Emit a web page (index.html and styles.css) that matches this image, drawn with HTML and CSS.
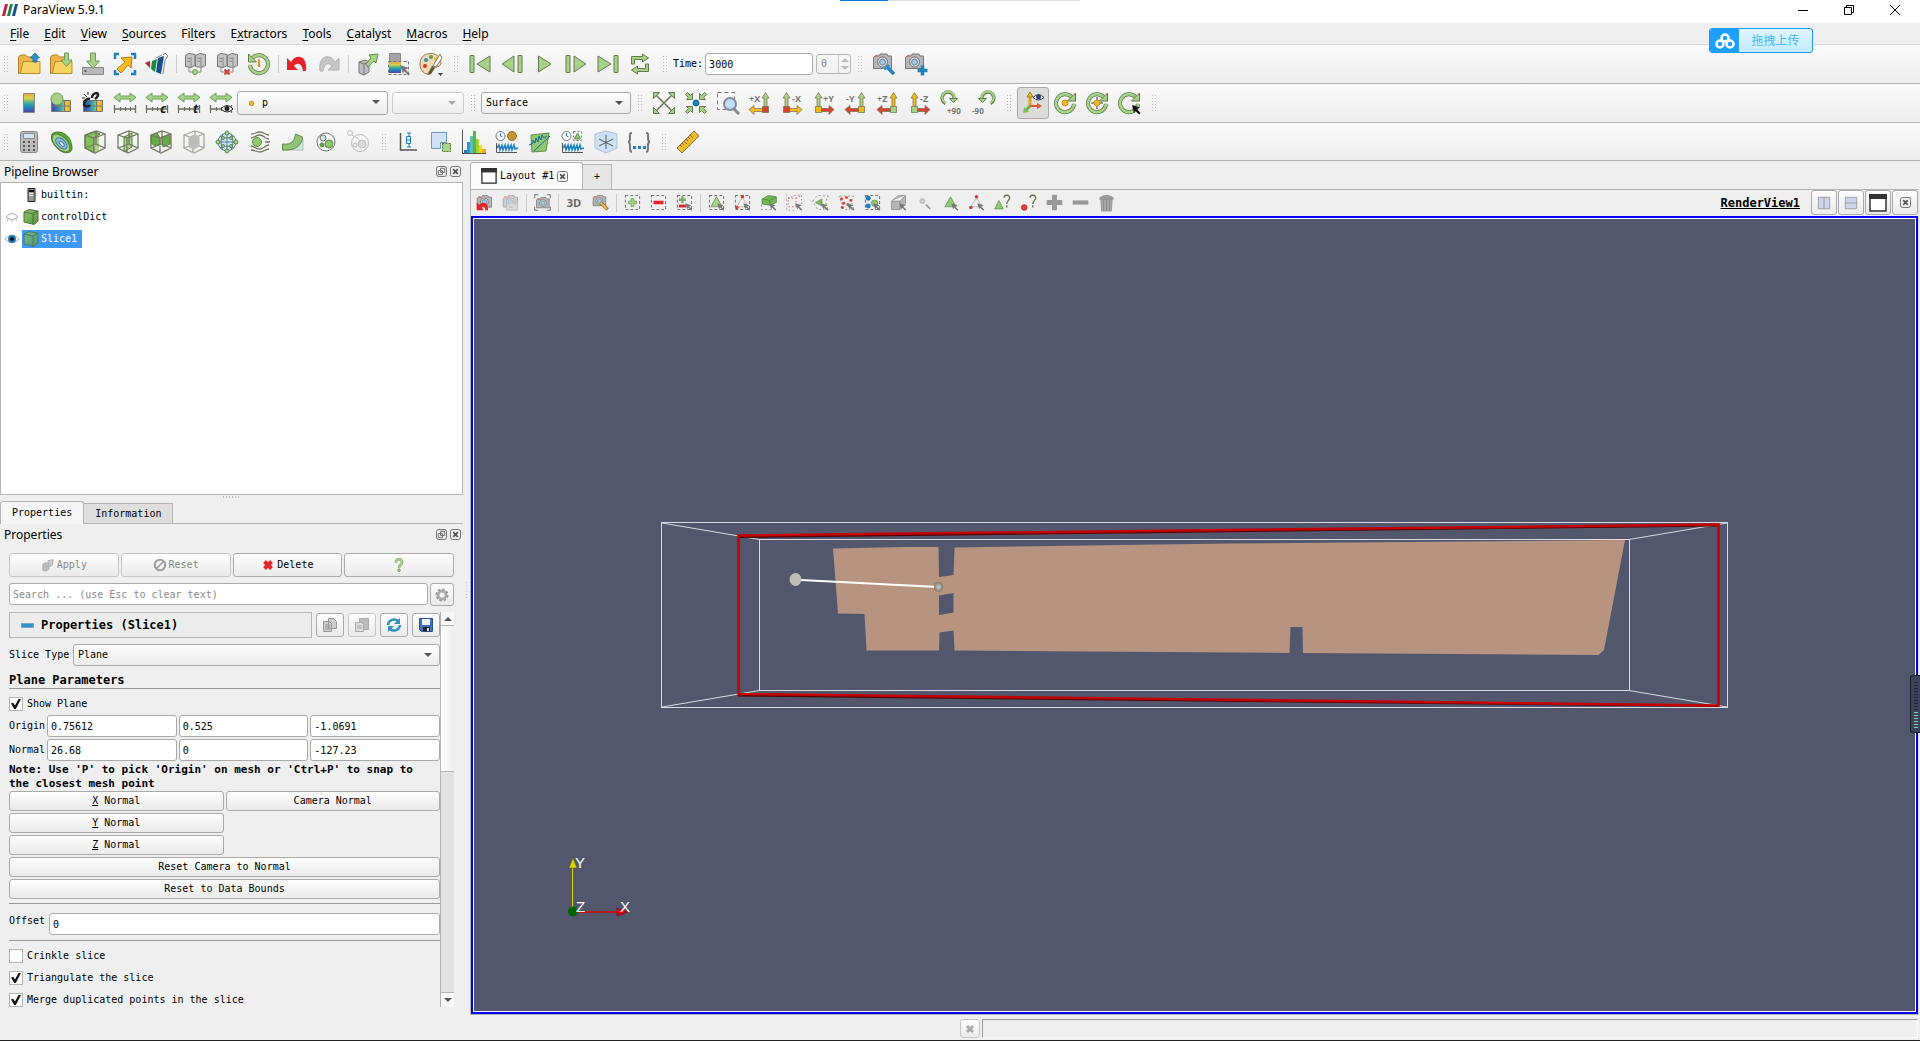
FILE: index.html
```html
<!DOCTYPE html>
<html lang="en">
<head>
<meta charset="utf-8">
<title>ParaView 5.9.1</title>
<link rel="stylesheet" href="styles.css">
</head>
<body>
<svg class="defs" aria-hidden="true">
  <defs>
    <linearGradient id="rainbow" x1="0" y1="0" x2="0" y2="1"><stop offset="0" stop-color="#e8a33a"/><stop offset=".25" stop-color="#d9d44a"/><stop offset=".5" stop-color="#3fae9a"/><stop offset=".75" stop-color="#1b7fc4"/><stop offset="1" stop-color="#5b3f9a"/></linearGradient>
    <linearGradient id="rainbowH"><stop offset="0" stop-color="#5b3f9a"/><stop offset=".3" stop-color="#1b7fc4"/><stop offset=".55" stop-color="#4cb8a0"/><stop offset=".8" stop-color="#f3c623"/><stop offset="1" stop-color="#ee9a2a"/></linearGradient>
    <linearGradient id="cube" x1="0" y1="0" x2="1" y2="1"><stop offset="0" stop-color="#8cc56a"/><stop offset="1" stop-color="#5a9440"/></linearGradient>
    <radialGradient id="ball"><stop offset="0" stop-color="#d5d2c8"/><stop offset="1" stop-color="#77776f"/></radialGradient>
    <symbol id="folder" viewBox="0 0 24 24"><path fill="#eeb64a" stroke="#b97e25" d="M1.500 21V5l2-2h5l2 2h9v16z"/><path fill="#f6d463" stroke="#b98d2d" d="M3.500 21.500 6 9.500h17v12H1.500z"/></symbol>
    <symbol id="servers" viewBox="0 0 24 24"><g fill="#c4c4c4" stroke="#777"><path d="M2.500 3.500 6 1.500l6 1v11l-4 2-5.500-1z"/><path d="M12.500 3.500l4-2 6 1v11l-4 2-6-1z"/></g><path stroke="#888" d="M8 5v10M18 5v10M4 6l3 .5M4 9l3 .5M14 6l3 .5M14 9l3 .5M6 15v5h12v-5"/></symbol>
    <symbol id="range" viewBox="0 0 24 24"><path fill="#a6d388" stroke="#6f9a57" d="M1 6.500 7 2v3h10V2l6 4.500-6 4.500V8H7v3z"/><path stroke="#6f6f5d" stroke-width="1.300" d="M1.500 14v8M7.500 16v4M12.500 16v4M17.500 16v4M22.500 14v8M1.500 18h21"/></symbol>
    <symbol id="wire" viewBox="0 0 24 24"><path stroke="#777762" stroke-width="1.300" d="M2 5 13 1l9 3v14L12 23 2 18zM2 5l9 3 11-4M11 8v15M13 1v13l9 4M13 14 2 18"/></symbol>
    <symbol id="camera" viewBox="0 0 24 24"><path fill="#b5b5b5" stroke="#777" d="M1.500 5.500 3 4h4l1-2h7l1 2h3.500v12.500h-18z"/><circle cx="10.500" cy="10" r="5" fill="#dcdcdc" stroke="#777"/><circle cx="10.500" cy="10" r="3" fill="#9fc8e4" stroke="#6a8ba0"/><rect x="3" y="3" width="3" height="2" fill="#ef6a50" stroke="none"/></symbol>
    <symbol id="cursor" viewBox="0 0 24 24"><path fill="#777" stroke="none" d="m13 13 9 3-3.500 1.500L23 22l-1.500 1.500-4.500-4.500L16 22z"/></symbol>
    <symbol id="dash" viewBox="0 0 24 24"><path stroke="#777" stroke-width="1.500" stroke-dasharray="4 3" d="M2 2h20v20H2z"/></symbol>
    <symbol id="clock" viewBox="0 0 24 24"><circle cx="5.500" cy="6" r="4.500" fill="#fff" stroke="#777"/><path stroke="#1b7fc4" d="M5.500 3v3l2 1"/><path stroke="#1b7fc4" stroke-width="1.500" d="M2 18l2-3 1 5 2-5 1 5 2-5 1 5 2-5 1 5 2-5 1 5 2-5 1 4 3-1"/><path stroke="#555" d="M1.500 13v9.500H22"/></symbol>
    <symbol id="rot" viewBox="0 0 24 24"><path stroke="#66784f" stroke-width="4" d="M19 6.500A9 9 0 1 0 21 13"/><path stroke="#a6d388" stroke-width="2.500" d="M19 6.500A9 9 0 1 0 21 12.500"/><path fill="#a6d388" stroke="#66784f" d="M22.500 2v8h-8z"/></symbol>
    <symbol id="float" viewBox="0 0 12 12"><rect x=".5" y=".5" width="11" height="11" rx="2.500" stroke="#666" fill="none"/><path d="M5 2.500h4.500V7H5zM2.500 5H7v4.500H2.500z" fill="#eee" stroke="#666"/></symbol>
    <symbol id="close" viewBox="0 0 12 12"><rect x=".5" y=".5" width="11" height="11" rx="2.500" stroke="#666" fill="none"/><path d="m3.500 3.500 5 5m0-5-5 5" stroke="#555" stroke-width="2"/></symbol>
    <symbol id="box" viewBox="0 0 16 16"><path d="M1 3 6 .5 15 2v10l-4 3.500L1 13z" fill="url(#cube)" stroke="#4d6e3c"/><path d="M1 3l9 2 5-3M10 5v10" stroke="#4d6e3c" fill="none"/></symbol>
    <symbol id="window" viewBox="0 0 18 18"><rect x="1" y="1" width="16" height="16" fill="#fff" stroke="#333" stroke-width="1.500"/><path fill="#333" d="M0 0h18v5H0z"/></symbol>
  </defs>
</svg>

<div class="app">
  <header class="titlebar">
    <svg class="logo" viewBox="0 0 16 12"><path fill="#c2203a" d="M3 0h3L3 12H0z"/><path fill="#1d8a3c" d="M8 0h3L8 12H5z"/><path fill="#1a4e8c" d="M13 0h3l-3 12h-3z"/></svg>
    <span class="apptitle">ParaView 5.9.1</span>
    <span class="progress"></span>
    <div class="winbtns">
      <button aria-label="Minimize"><svg viewBox="0 0 12 12"><path d="M1 6.500h10"/></svg></button>
      <button aria-label="Restore"><svg viewBox="0 0 12 12"><path d="M1.500 3.500h7v7h-7zM3.500 3V1.500h7v7H9"/></svg></button>
      <button aria-label="Close window"><svg viewBox="0 0 12 12"><path d="m1 1 10 10m0-10L1 11"/></svg></button>
    </div>
  </header>

  <nav class="menubar">
    <a href="#"><u>F</u>ile</a><a href="#"><u>E</u>dit</a><a href="#"><u>V</u>iew</a><a href="#"><u>S</u>ources</a><a href="#">Fi<u>l</u>ters</a><a href="#">E<u>x</u>tractors</a><a href="#"><u>T</u>ools</a><a href="#"><u>C</u>atalyst</a><a href="#"><u>M</u>acros</a><a href="#"><u>H</u>elp</a>
  </nav>

  <div class="toolbar">
    <i class="handle first"></i>
    <button aria-label="Open"><svg viewBox="0 0 24 24"><use href="#folder"/><path fill="#2e93cc" stroke="#23729f" d="m18 1 4.500 5H20v4h-4V6h-2.500z"/></svg></button>
    <button aria-label="Load state"><svg viewBox="0 0 24 24"><use href="#folder"/><path fill="#a6d388" stroke="#6f9a57" d="M15.500 1h4v7h3.500l-5.500 6.500L12 8h3.500z"/></svg></button>
    <button aria-label="Save data"><svg viewBox="0 0 24 24"><path fill="#b9b9b9" stroke="#888" d="M1.500 15.500h21v7h-21z"/><path fill="#a6d388" stroke="#6f9a57" d="M9.500 1h5v8h4L12 16.500 5.500 9h4z"/><circle cx="4.500" cy="19" r="1" fill="#444" stroke="none"/></svg></button>
    <button aria-label="Save screenshot"><svg viewBox="0 0 24 24"><path stroke="#2680b8" stroke-width="2.500" d="M2 7V2h4M18 2h4v5M22 18v4h-4M6 22H2v-4"/><path fill="#f5bd1f" stroke="#b07c14" d="m8 6 11-1-1 11-3-3-7 8-4-4 8-7z"/></svg></button>
    <button aria-label="Save animation"><svg viewBox="0 0 24 24"><path fill="#c2203a" stroke="#888" stroke-width=".5" d="m0 11 5-2v7z"/><path fill="#1d8a3c" stroke="none" d="m7 9 5-2-2 13-4-3z"/><path fill="#1a4e8c" stroke="none" d="m13 6 6-2-3 18-5-2z"/><path stroke="#888" d="m18 3 2-2 3 3-3 4-2 14M17 3l-6 3"/></svg></button>
    <i class="sep"></i>
    <button aria-label="Connect"><svg viewBox="0 0 24 24"><use href="#servers"/><circle cx="12" cy="20" r="2.500" fill="#a6d388" stroke="#6f9a57"/></svg></button>
    <button aria-label="Disconnect"><svg viewBox="0 0 24 24"><use href="#servers"/><path stroke="#d83a2a" stroke-width="2" d="m9.500 17.500 5 5m0-5-5 5"/></svg></button>
    <button aria-label="Reset session"><svg viewBox="0 0 24 24"><path stroke="#66784f" stroke-width="4" d="M5 6.500A9 9 0 1 1 3 13"/><path stroke="#a6d388" stroke-width="2.500" d="M5 6.500A9 9 0 1 1 3 12.500"/><path fill="#a6d388" stroke="#66784f" d="M1.500 2v8h8z"/><path stroke="#d89a20" stroke-width="2" d="M12 7v6"/><circle cx="12" cy="13.500" r="1.500" fill="#d89a20" stroke="none"/></svg></button>
    <i class="sep"></i>
    <button aria-label="Undo"><svg viewBox="0 0 24 24"><path fill="#e8222a" stroke="none" d="M2 6v12h11l-4-4c3-4 8-3 9 5h3C23 3 11 1 6 10z"/></svg></button>
    <button aria-label="Redo" disabled><svg viewBox="0 0 24 24"><path fill="#c6c6c6" stroke="#b2b2b2" d="M22 6v12H11l4-4c-3-4-8-3-9 5H3C1 3 13 1 18 10z"/></svg></button>
    <i class="sep"></i>
    <button aria-label="Extract"><svg viewBox="0 0 24 24"><path fill="#bdbdbd" stroke="#777" d="m4 10 6-2 4 2v10l-5 3-5-2z"/><path stroke="#777" d="m4 10 5 2 5-2m-5 2v11"/><path fill="#a6d388" stroke="#6f8a57" d="m14 3 9-1-2 9-2-2-6 6-2-3 5-6z"/></svg></button>
    <button aria-label="Auto color"><svg viewBox="0 0 24 24"><path fill="#a5a5a5" stroke="#888" d="M2.500 1.500h11V11h-11z"/><path fill="url(#rainbow)" stroke="none" d="M2 10h12v11H2z"/><path stroke="#777" stroke-dasharray="3 2" d="M1.500 9.500h20v13h-20z"/><use href="#cursor"/></svg></button>
    <button aria-label="Color palette"><svg viewBox="0 0 24 24"><path fill="#f0d9b4" stroke="#9b7a53" d="M12 1.500C5 1.500 1 6 1 12c0 7 5 11 10 10 3-1 1-4 2-6s8 1 9-5c0-5-4-9.500-10-9.500z"/><circle cx="7" cy="8" r="2" fill="#2d8fd0" stroke="none"/><circle cx="12" cy="5" r="2" fill="#57a345" stroke="none"/><circle cx="17" cy="7" r="2" fill="#f0ba20" stroke="none"/><circle cx="6" cy="14" r="2" fill="#d8322a" stroke="none"/><path fill="#fff" stroke="#777" d="m21 2 2 4-6 9-3-1z"/><path fill="#6c5338" stroke="none" d="m13 14 3 2-4 6-4 1z"/><path fill="#444" stroke="none" d="M19 21h5l-2.500 3z"/></svg></button>
    <i class="handle"></i>
    <button aria-label="First frame"><svg viewBox="0 0 24 24" class="play"><path d="M2 3.500h4v17H2zM22 4v16L9 12z"/></svg></button>
    <button aria-label="Previous frame"><svg viewBox="0 0 24 24" class="play"><path d="M18 3.500h4v17h-4zM14 4v16L2 12z"/></svg></button>
    <button aria-label="Play"><svg viewBox="0 0 24 24" class="play"><path d="M6.500 4v16L19 12z"/></svg></button>
    <button aria-label="Next frame"><svg viewBox="0 0 24 24" class="play"><path d="M2 3.500h4v17H2zM10 4v16l12-8z"/></svg></button>
    <button aria-label="Last frame"><svg viewBox="0 0 24 24" class="play"><path d="M18 3.500h4v17h-4zM2 4v16l13-8z"/></svg></button>
    <button aria-label="Loop"><svg viewBox="0 0 24 24" class="play"><path d="M3.500 12V4.500h11V2l6 4-6 4V7.500h-8V12zM20.500 12v7.500h-11V22l-6-4 6-4v2.500h8V12z"/></svg></button>
    <i class="handle"></i>
    <label class="timelabel" for="time">Time:</label>
    <input class="field time" id="time" value="3000">
    <span class="spin"><input value="0" disabled aria-label="Time step"><span class="steps"><i class="up"></i><i class="down"></i></span></span>
    <i class="handle"></i>
    <button aria-label="Adjust camera"><svg viewBox="0 0 24 24"><use href="#camera"/><path stroke="#2680b8" stroke-width="3.500" d="m14 14 8 8"/><path stroke="#2e93cc" stroke-width="2.500" d="m12 17 3-1 2-3"/></svg></button>
    <button aria-label="Add camera link"><svg viewBox="0 0 24 24"><use href="#camera"/><path stroke="#2680b8" stroke-width="3.500" d="M18.500 13.500v10M13.500 18.500h10"/></svg></button>
  </div>

  <div class="toolbar">
    <i class="handle first"></i>
    <button aria-label="Color legend"><svg viewBox="0 0 24 24"><path fill="url(#rainbow)" stroke="#888" d="M6.500 2.500h11v19h-11z"/></svg></button>
    <button aria-label="Edit color map"><svg viewBox="0 0 24 24"><path fill="url(#rainbowH)" stroke="#777" d="M2.500 9.500h19v11h-19zM2.500 15h19M9 9.500v11M15.500 9.500v11"/><circle cx="8" cy="8" r="6" fill="#a6d388" stroke="#6f9a57"/></svg></button>
    <button aria-label="Separate color map"><svg viewBox="0 0 24 24"><path fill="url(#rainbowH)" stroke="#777" d="M2.500 9.500h19v11h-19zM2.500 15h19M9 9.500v11M15.500 9.500v11"/><path stroke="#222" stroke-width="2.500" d="M9 8C6 7 3 10 3 13s5 3 6 1M11 7c0-3 2-5 5-5 2 1 1 4-2 6"/><path stroke="#222" d="m3 3 3 3M7 1v3M1 7h3"/></svg></button>
    <button aria-label="Rescale to data"><svg viewBox="0 0 24 24"><use href="#range"/></svg></button>
    <button aria-label="Rescale to custom"><svg viewBox="0 0 24 24"><use href="#range"/><text x="15" y="22" class="glyph">c</text></svg></button>
    <button aria-label="Rescale over time"><svg viewBox="0 0 24 24"><use href="#range"/><text x="16" y="22" class="glyph">t</text></svg></button>
    <button aria-label="Rescale to visible"><svg viewBox="0 0 24 24"><use href="#range"/><path fill="#fff" stroke="#222" d="M12 18q6-7 12 0-6 6-12 0z"/><circle cx="18" cy="17.500" r="2.500" fill="#222" stroke="none"/></svg></button>
    <span class="combo array"><i class="point"></i><select aria-label="Coloring array"><option>p</option></select></span>
    <span class="combo component off"><select aria-label="Component" disabled><option></option></select></span>
    <i class="handle"></i>
    <span class="combo repr"><select aria-label="Representation"><option>Surface</option></select></span>
    <i class="handle"></i>
    <button aria-label="Reset camera"><svg viewBox="0 0 24 24"><path stroke="#66784f" stroke-width="1.500" d="m4 4 16 16m0-16L4 20"/><path fill="#a6d388" stroke="#66784f" d="M1.500 1.500h6l-6 6zM22.500 1.500v6l-6-6zM1.500 22.500v-6l6 6zM22.500 22.500h-6l6-6z"/></svg></button>
    <button aria-label="Zoom to data"><svg viewBox="0 0 24 24"><path fill="#a6d388" stroke="#66784f" d="M8.500 8.500h-6l2-2-3-3 2-2 3 3 2-2zM15.500 8.500v-6l2 2 3-3 2 2-3 3 2 2zM8.500 15.500v6l-2-2-3 3-2-2 3-3-2-2zM15.500 15.500h6l-2 2 3 3-2 2-3-3-2 2z"/><circle cx="12" cy="12" r="3" fill="#1b7fc4" stroke="#165f93"/></svg></button>
    <button aria-label="Zoom to box"><svg viewBox="0 0 24 24"><path stroke="#777" stroke-dasharray="4 3" d="M1.500 1.500h17v17h-17z"/><circle cx="14" cy="13" r="6" fill="#bfe0f3" stroke="#889" stroke-width="2"/><path stroke="#888" stroke-width="3" d="m18 18 5 5"/></svg></button>
    <button aria-label="Set view +X"><svg viewBox="0 0 24 24" class="ax"><path fill="#a6d388" d="M17.500 1.500 21 7h-2v9h-3V7h-2z"/><path fill="#f3bb1e" d="m1 18.500 5-4v3h9v3H6v3z"/><path fill="#d8402f" d="M14.500 15.500h6v6h-6z"/><text x="1" y="11">+X</text></svg></button>
    <button aria-label="Set view -X"><svg viewBox="0 0 24 24" class="ax"><path fill="#a6d388" d="M6.500 1.500 10 7H8v9H5V7H3z"/><path fill="#f3bb1e" d="m22 18.500-5-4v3H9v3h8v3z"/><path fill="#d8402f" d="M3.500 15.500h6v6h-6z"/><text x="12" y="11">-X</text></svg></button>
    <button aria-label="Set view +Y"><svg viewBox="0 0 24 24" class="ax"><path fill="#a6d388" d="M6.500 1.500 10 7H8v9H5V7H3z"/><path fill="#d8402f" d="m22 18.500-5-4v3H9v3h8v3z"/><path fill="#f3bb1e" d="M3.500 15.500h6v6h-6z"/><text x="11" y="11">+Y</text></svg></button>
    <button aria-label="Set view -Y"><svg viewBox="0 0 24 24" class="ax"><path fill="#a6d388" d="M17.500 1.500 21 7h-2v9h-3V7h-2z"/><path fill="#d8402f" d="m1 18.500 5-4v3h9v3H6v3z"/><path fill="#f3bb1e" d="M14.500 15.500h6v6h-6z"/><text x="2" y="11">-Y</text></svg></button>
    <button aria-label="Set view +Z"><svg viewBox="0 0 24 24" class="ax"><path fill="#f3bb1e" d="M17.500 1.500 21 7h-2v9h-3V7h-2z"/><path fill="#d8402f" d="m1 18.500 5-4v3h9v3H6v3z"/><path fill="#a6d388" d="M14.500 15.500h6v6h-6z"/><text x="1" y="11">+Z</text></svg></button>
    <button aria-label="Set view -Z"><svg viewBox="0 0 24 24" class="ax"><path fill="#f3bb1e" d="M6.500 1.500 10 7H8v9H5V7H3z"/><path fill="#d8402f" d="m22 18.500-5-4v3H9v3h8v3z"/><path fill="#a6d388" d="M3.500 15.500h6v6h-6z"/><text x="12" y="11">-Z</text></svg></button>
    <button aria-label="Rotate clockwise"><svg viewBox="0 0 24 24"><path stroke="#66784f" stroke-width="3.500" d="M5.500 12.500A6 6 0 1 1 14 8"/><path stroke="#a6d388" stroke-width="2" d="M6 12A6 6 0 1 1 14 8"/><path fill="#a6d388" stroke="#66784f" d="M9.500 7.500h8l-4 4z"/><text x="7" y="23" class="deg">+90</text></svg></button>
    <button aria-label="Rotate counterclockwise"><svg viewBox="0 0 24 24"><path stroke="#66784f" stroke-width="3.500" d="M18.500 12.500A6 6 0 1 0 10 8"/><path stroke="#a6d388" stroke-width="2" d="M18 12A6 6 0 1 0 10 8"/><path fill="#a6d388" stroke="#66784f" d="M14.500 7.500h-8l4 4z"/><text x="0" y="23" class="deg">-90</text></svg></button>
    <i class="handle"></i>
    <button class="on" aria-label="Show orientation axes"><svg viewBox="0 0 24 24"><path stroke="#e0a51c" stroke-width="3" d="M9 15V6"/><path fill="#f3bb1e" stroke="#a57b1b" d="m9 1 3 5H6z"/><path stroke="#e0552f" stroke-width="2" d="M9 15h8"/><path fill="#e0552f" stroke="none" d="m21 15-5-3v6z"/><path stroke="#69b04d" stroke-width="3" d="m9 15-4 4"/><path fill="#7cc35d" stroke="none" d="m2 22 1-6 5 5z"/><path fill="#fff" stroke="#444" d="M12 6.500q5.500-6 11 0-5.500 5-11 0z"/><circle cx="17.500" cy="6" r="2.500" fill="#32387a" stroke="none"/></svg></button>
    <button aria-label="Show center"><svg viewBox="0 0 24 24"><use href="#rot"/><circle cx="12" cy="12" r="3" fill="#f3bb1e" stroke="#c58d1a"/></svg></button>
    <button aria-label="Reset center"><svg viewBox="0 0 24 24"><use href="#rot"/><path stroke="#777" stroke-width="1.500" d="M12 6v12M6 12h12"/><circle cx="12" cy="12" r="3" fill="#f3bb1e" stroke="#c58d1a"/></svg></button>
    <button aria-label="Pick center"><svg viewBox="0 0 24 24"><use href="#rot"/><path fill="#111" stroke="none" d="m15 14 8 2.500-3 1.500 3.500 4-1.500 1.500-4-4-1 3z"/></svg></button>
    <i class="handle"></i>
  </div>

  <div class="toolbar wide">
    <i class="handle first"></i>
    <button aria-label="Calculator"><svg viewBox="0 0 24 24"><rect x="3.500" y="1.500" width="17" height="21" rx="2" fill="#bbb" stroke="#888"/><path fill="#cfe6f5" stroke="#888" d="M6.500 3.500h11v5h-11z"/><path stroke="#555" stroke-width="2" stroke-dasharray="2 3" d="M6 12h13M6 16h13M6 20h13"/></svg></button>
    <button aria-label="Contour"><svg viewBox="0 0 24 24"><path fill="#56a838" stroke="#3e7f2a" d="M2 4C8-1 22 3 22 19c-1 5-9 5-14 0C3 15 0 8 2 4z"/><ellipse cx="11" cy="13" rx="11" ry="6" transform="rotate(45 11 13)" fill="#a6d388" stroke="#55802f"/><ellipse cx="11.500" cy="13" rx="7" ry="4" transform="rotate(45 11 13)" fill="#8fc0de" stroke="#4178a0"/><ellipse cx="12" cy="13" rx="3.500" ry="1.500" transform="rotate(45 11 13)" fill="#dceef8" stroke="#4178a0"/></svg></button>
    <button aria-label="Clip"><svg viewBox="0 0 24 24"><path fill="#7fbf5c" stroke="#54803c" d="M2 5 12 2l5 2-6 4v15l-9-5z"/><path fill="#a6d388" stroke="none" d="m11 8 5-3v15l-5 3z"/><use href="#wire"/></svg></button>
    <button aria-label="Slice"><svg viewBox="0 0 24 24"><path fill="#a6d388" stroke="#54803c" d="m8 7 8-4v14l-8 5z"/><use href="#wire"/></svg></button>
    <button aria-label="Threshold"><svg viewBox="0 0 24 24"><path fill="#66ad47" stroke="#54803c" d="m2 5 6-2 3 5v6l-5 2-4-3zM13 7l8-3v10l-7 3z"/><use href="#wire"/></svg></button>
    <button aria-label="Extract subset"><svg viewBox="0 0 24 24" class="dim"><use href="#wire"/><path fill="#999" stroke="#888" d="m7 7 6-2 4 2v9l-5 3-5-2z"/></svg></button>
    <button aria-label="Glyph"><svg viewBox="0 0 24 24"><circle cx="12" cy="12" r="9" fill="#cfe4f3" stroke="#557b96"/><path stroke="#557b96" d="M12 3v18M3 12h18M5 6q7 4 14 0M5 18q7-4 14 0M8 4q-4 8 0 16M16 4q4 8 0 16"/><g fill="#a6d388" stroke="#5f8a48"><circle cx="12" cy="3" r="2"/><circle cx="12" cy="21" r="2"/><circle cx="3" cy="12" r="2"/><circle cx="21" cy="12" r="2"/><circle cx="8" cy="8" r="1.500"/><circle cx="16" cy="8" r="1.500"/><circle cx="8" cy="16" r="1.500"/><circle cx="16" cy="16" r="1.500"/></g></svg></button>
    <button aria-label="Stream tracer"><svg viewBox="0 0 24 24"><path stroke="#777762" stroke-width="1.300" d="M3 4c4 0 5-2 9-2s5 3 9 3M3 8c3 0 4-3 9-3 4 0 5 4 9 4M3 20c4 0 5 2 9 2s5-3 9-3M3 16c3 0 4 3 9 3 4 0 5-4 9-4M17 12h5"/><circle cx="9" cy="12" r="4.500" fill="#8ecb6b" stroke="#5f8a48"/></svg></button>
    <button aria-label="Warp by vector"><svg viewBox="0 0 24 24"><path fill="#cfe9e2" stroke="#a8bfb8" d="M2 20h20V9z"/><path fill="#8fc373" stroke="#5f8a48" d="M1.500 14c9 1 12-3 13-10l7 3c0 8-7 14-20 13z"/></svg></button>
    <button aria-label="Group datasets"><svg viewBox="0 0 24 24"><circle cx="12" cy="12" r="9" fill="#f4f8fa" stroke="#777"/><circle cx="9" cy="8" r="3" fill="#cce6dc" stroke="#777"/><circle cx="15" cy="14" r="4" fill="#8ecb6b" stroke="#5f8a48"/><circle cx="8" cy="15" r="2" fill="#5fab42" stroke="#5f8a48"/></svg></button>
    <button aria-label="Extract level" disabled><svg viewBox="0 0 24 24" class="dim"><circle cx="13" cy="13" r="8.500"/><circle cx="15" cy="14" r="4" fill="#ccc"/><circle cx="8" cy="15" r="2"/><circle cx="3" cy="3" r="2.500"/><path d="m5 5 7 4"/></svg></button>
    <i class="handle"></i>
    <button aria-label="Plot over line"><svg viewBox="0 0 24 24"><path stroke="#555" stroke-width="1.500" d="M4.500 3v17H21"/><path stroke="#1b7fc4" d="M13 3v3m0 8v3M11 3h4m-4 14h4M10.500 6.500h4v7h-4zM10.500 10h4"/></svg></button>
    <button aria-label="Extract selection"><svg viewBox="0 0 24 24"><path fill="#cfe2f3" stroke="#6d9ac0" d="M2.500 2.500h15v10h-6v6h-9z"/><path fill="#a6d388" stroke="#55702f" stroke-dasharray="2 1" d="M13.500 13.500h8v8h-8z"/></svg></button>
    <button aria-label="Histogram"><svg viewBox="0 0 24 24" class="hist"><path fill="#3575a8" d="M2 20h3v3H2z"/><path fill="#1e9bf0" d="M5 12h3v11H5z"/><path fill="#62c0aa" d="M8 6h3v17H8z"/><path fill="#54b848" d="M11 1h3v22h-3z"/><path fill="#a5d133" d="M14 9h3v14h-3z"/><path fill="#f9dc05" d="M17 15h3v8h-3z"/><path fill="#f5a81c" d="M20 19h4v4h-4z"/><path fill="#555" d="M0 0h1v24H0zM0 23h24v1H0z"/></svg></button>
    <button aria-label="Plot data over time"><svg viewBox="0 0 24 24"><use href="#clock"/><circle cx="17" cy="6" r="4.500" fill="#c5952f" stroke="#8f6b20"/></svg></button>
    <button aria-label="Plot on intersection"><svg viewBox="0 0 24 24"><path fill="#8fca70" stroke="#5f8a48" d="m3 5 18-2-3 18-14 1z"/><path stroke="#1b5fa0" d="m1 15 4-2 0-3 2 3 1-5 2 4 1-6 2 4 1-5 2 3 3-2M6 21 22 6"/></svg></button>
    <button aria-label="Plot selection over time"><svg viewBox="0 0 24 24"><use href="#clock"/><path stroke="#777" stroke-dasharray="2 2" d="M12.500 1.500h8v9h-8z"/><path fill="#8fca70" stroke="#5f8a48" d="m16.500 3 3 6h-6z"/></svg></button>
    <button aria-label="Probe location"><svg viewBox="0 0 24 24"><path fill="#cfe2f3" stroke="#a9c6dd" d="m1 4 11-3 11 3v14l-11 5-11-5z"/><path stroke="#555" d="M12 5v14M5 9l14 7M19 9 5 16"/></svg></button>
    <button aria-label="Programmable filter"><svg viewBox="0 0 24 24"><path stroke="#777" stroke-width="2" d="M5 3c-3 0-2 2-2 5s-1 4-2 4c2 0 2 2 2 5s0 5 2 5M19 3c3 0 2 2 2 5s1 4 2 4c-2 0-2 2-2 5s0 5-2 5"/><path stroke="#2680b8" stroke-width="3" stroke-dasharray="3 2" d="M6 17.500h13"/></svg></button>
    <i class="handle"></i>
    <button aria-label="Ruler"><svg viewBox="0 0 24 24"><path fill="#f0bb28" stroke="#8f7231" d="m1 18 17-17 5 5L6 23z"/><path stroke="#7b6128" d="m4 15 2 2m0-4 2 2m0-4 3 3m-1-5 2 2m0-4 2 2m0-4 3 3"/></svg></button>
  </div>

  <main class="main">
    <aside class="dock">
      <div class="docktitle"><h2>Pipeline Browser</h2><button aria-label="Float pipeline"><svg><use href="#float"/></svg></button><button aria-label="Close pipeline"><svg><use href="#close"/></svg></button></div>
      <ul class="tree">
        <li><span class="eye"></span><span class="node"><svg viewBox="0 0 16 16"><path d="M5 1.500h7v13H5z" fill="#999" stroke="#222"/><path stroke="#111" stroke-width="2" d="M6 4h5"/><path stroke="#eee" d="M6 6.500h4M6 8.500h4"/></svg>builtin:</span></li>
        <li><span class="eye"><svg viewBox="0 0 14 10"><path d="M1 5q6-7 12 0M1 5q6 5 12 0M3 7 2 9M7 8v2M11 7l1 2" stroke="#aaa" fill="none"/></svg></span><span class="node"><svg><use href="#box"/></svg>controlDict</span></li>
        <li><span class="eye"><svg viewBox="0 0 14 10"><path d="M0 5q7-8 14 0-7 8-14 0z" fill="#fff" stroke="#aaa"/><circle cx="7" cy="5" r="4" fill="#1b7fb8"/><circle cx="7" cy="5" r="2" fill="#000"/></svg></span><span class="node selected"><svg><use href="#box"/></svg>Slice1</span></li>
      </ul>
      <i class="hgrip"></i>
      <div class="tabs"><button class="active">Properties</button><button>Information</button></div>
      <div class="docktitle"><h2>Properties</h2><button aria-label="Float properties"><svg><use href="#float"/></svg></button><button aria-label="Close properties"><svg><use href="#close"/></svg></button></div>

      <section class="props">
        <div class="actions">
          <button class="btn" disabled><svg viewBox="0 0 16 16"><path fill="#bbb" stroke="#aaa" d="m2 7 4-2 3 2v6l-4 2-3-1z"/><path fill="#ccc" stroke="#aaa" d="m8 3 6-1-1 6-4 2z"/></svg>Apply</button>
          <button class="btn" disabled><svg viewBox="0 0 16 16"><circle cx="8" cy="8" r="6" stroke="#a0a0a0" stroke-width="2.500" fill="none"/><path d="m4 12 8-8" stroke="#a0a0a0" stroke-width="2"/></svg>Reset</button>
          <button class="btn"><svg viewBox="0 0 16 16"><path d="m4 4 8 8m0-8-8 8" stroke="#e3242b" stroke-width="4.500"/></svg>Delete</button>
          <button class="btn" aria-label="Help"><svg viewBox="0 0 16 16"><path d="M4.500 5c0-5 7-4.500 7 0 0 3-3.500 3-3.500 6" stroke="#79965f" stroke-width="3" fill="none"/><path d="M4.500 5c0-5 7-4.500 7 0 0 3-3.500 3-3.500 6" stroke="#a6d388" stroke-width="2" fill="none"/><circle cx="8" cy="14" r="1.500" fill="#a6d388" stroke="#79965f"/></svg></button>
        </div>
        <div class="search"><input class="field" placeholder="Search ... (use Esc to clear text)" aria-label="Search properties"><button class="btn" aria-label="Advanced"><svg viewBox="0 0 16 16"><circle cx="8" cy="8" r="4.500" fill="none" stroke="#aaa" stroke-width="3"/><circle cx="8" cy="8" r="6.500" fill="none" stroke="#999" stroke-width="2" stroke-dasharray="3 2"/></svg></button></div>

        <div class="scroll">
          <div class="form">
            <div class="grouphead">
              <h3><i class="minus"></i>Properties (Slice1)</h3>
              <button class="btn" aria-label="Copy"><svg viewBox="0 0 16 16"><path fill="#ccc" stroke="#999" d="M6.500 1.500h5l3 3v7h-8zM1.500 4.500h6l2 2v8h-8z"/><path stroke="#999" d="M3 8h5M3 10h5M3 12h5"/></svg></button>
              <button class="btn" aria-label="Paste" disabled><svg viewBox="0 0 16 16"><path fill="#bbb" stroke="#aaa" d="M5.500 1.500h9v11h-9z"/><path fill="#ddd" stroke="#aaa" d="M1.500 5.500h6l2 2v7h-8z"/><path stroke="#aaa" d="M3 9h5M3 11h5"/></svg></button>
              <button class="btn" aria-label="Restore defaults"><svg viewBox="0 0 16 16"><path fill="none" stroke="#3590c0" stroke-width="2.500" d="M2 8a6 6 0 0 1 10-4M14 8a6 6 0 0 1-10 4"/><path fill="#3590c0" d="M14 1v6H8zM2 15V9h6z"/></svg></button>
              <button class="btn" aria-label="Save defaults"><svg viewBox="0 0 16 16"><path fill="#3f74b8" stroke="#28508a" d="M1.500 1.500h13v13h-11l-2-2z"/><path fill="#eef3fa" d="M4 2h8v6H4z"/><path fill="#222" d="M5 10h7v4H5z"/><path fill="#ddd" d="M9 11h2v3H9z"/></svg></button>
            </div>
            <div class="row slicetype"><label for="stype">Slice Type</label><span class="combo"><select id="stype"><option>Plane</option></select></span></div>
            <h4>Plane Parameters</h4>
            <label class="check"><input type="checkbox" checked>Show Plane</label>
            <div class="row vec"><label for="ox">Origin</label><input class="field" id="ox" value="0.75612"><input class="field" aria-label="Origin y" value="0.525"><input class="field" aria-label="Origin z" value="-1.0691"></div>
            <div class="row vec"><label for="nx">Normal</label><input class="field" id="nx" value="26.68"><input class="field" aria-label="Normal y" value="0"><input class="field" aria-label="Normal z" value="-127.23"></div>
            <p class="note">Note: Use 'P' to pick 'Origin' on mesh or 'Ctrl+P' to snap to the closest mesh point</p>
            <div class="normals">
              <button class="btn"><u>X</u>&nbsp;Normal</button><button class="btn">Camera Normal</button>
              <button class="btn left"><u>Y</u>&nbsp;Normal</button>
              <button class="btn left"><u>Z</u>&nbsp;Normal</button>
              <button class="btn full">Reset Camera to Normal</button>
              <button class="btn full">Reset to Data Bounds</button>
            </div>
            <div class="row offset"><label for="off">Offset</label><input class="field" id="off" value="0"></div>
            <label class="check"><input type="checkbox">Crinkle slice</label>
            <label class="check"><input type="checkbox" checked>Triangulate the slice</label>
            <label class="check"><input type="checkbox" checked>Merge duplicated points in the slice</label>
          </div>
          <div class="bar"><i class="arrow up"></i><i class="thumb"></i><i class="track"></i><i class="arrow down"></i></div>
        </div>
      </section>
    </aside>
    <i class="vgrip"></i>

    <section class="views">
      <div class="layouttabs">
        <span class="tab"><svg class="win"><use href="#window"/></svg>Layout #1<button aria-label="Close layout"><svg><use href="#close"/></svg></button></span>
        <button class="add" aria-label="Add layout">+</button>
      </div>
      <div class="viewpane">
      <div class="viewbar">
        <button aria-label="Camera undo"><svg viewBox="0 0 24 24"><use href="#camera" width="27" height="27"/><path fill="#e8222a" stroke="none" d="M1 12v11h10l-3-4c3-3 5-1 5 4h4C18 12 9 10 5 15z"/></svg></button>
        <button aria-label="Camera redo" disabled><svg viewBox="0 0 24 24" class="dim"><use href="#camera" width="27" height="27"/><path fill="#ccc" d="M22 12v11H12l3-4c-3-3-5-1-5 4H6C5 12 14 10 18 15z"/></svg></button>
        <i class="sep"></i>
        <button aria-label="Capture"><svg viewBox="0 0 24 24"><path stroke="#777" stroke-width="1.500" d="M1 6V1h5M18 1h5v5M23 18v5h-5M6 23H1v-5"/><g transform="translate(2 3)"><use href="#camera" width="24" height="24"/></g></svg></button>
        <i class="sep"></i>
        <button class="threed">3D</button>
        <button aria-label="Adjust view camera"><svg viewBox="0 0 24 24"><use href="#camera" width="24" height="24"/><path stroke="#8a6d28" stroke-width="5" d="m12 12 10 10"/><path stroke="#e6b84a" stroke-width="3" d="m12 12 9 9"/></svg></button>
        <i class="sep"></i>
        <button aria-label="Add selection"><svg viewBox="0 0 24 24"><use href="#dash"/><path stroke="#6f9a57" stroke-width="5" d="M12 6v12M6 12h12"/><path stroke="#a6d388" stroke-width="3" d="M12 7v10M7 12h10"/></svg></button>
        <button aria-label="Subtract selection"><svg viewBox="0 0 24 24"><use href="#dash"/><path stroke="#e8222a" stroke-width="5" d="M5 12h14"/></svg></button>
        <button aria-label="Toggle selection"><svg viewBox="0 0 24 24"><use href="#dash"/><path stroke="#7dae60" stroke-width="3.500" d="M9 3v10M4 8h10"/><path stroke="#e8222a" stroke-width="4" d="M4 17h10"/><use href="#cursor"/></svg></button>
        <i class="sep"></i>
        <button aria-label="Select cells on"><svg viewBox="0 0 24 24"><use href="#dash"/><path fill="#a6d388" stroke="#5f8a48" d="m12 4 8 14H4z"/><use href="#cursor"/></svg></button>
        <button aria-label="Select points on"><svg viewBox="0 0 24 24"><use href="#dash"/><path stroke="#aaa" d="m12 5 8 13H4z"/><g fill="#d83a2a" stroke="none"><circle cx="12" cy="4" r="2.500"/><circle cx="4" cy="19" r="2.500"/></g><use href="#cursor"/></svg></button>
        <button aria-label="Select cells through"><svg viewBox="0 0 24 24"><path fill="#72b852" stroke="#4d7f34" d="m3 7 9-5 11 2v8l-9 4-11-2z"/><path stroke="#4d7f34" d="m3 7 11 2 9-5m-9 5v7"/><use href="#cursor"/><path stroke="#777" stroke-dasharray="3 3" d="M2 15v7h14"/></svg></button>
        <button aria-label="Select points through"><svg viewBox="0 0 24 24"><path stroke="#d8402f" stroke-dasharray="2 3" d="m3 6 8-4h11v13l-8 3H3zM3 6h11v12m0-12 8-4"/><path stroke="#999" stroke-dasharray="3 3" d="M1 1v22h14"/><use href="#cursor"/></svg></button>
        <button aria-label="Select cells polygon"><svg viewBox="0 0 24 24"><path stroke="#777" stroke-dasharray="3 3" d="M1 10 8 2l15 1-4 8 3 10-14 1z"/><path fill="#7cba5e" stroke="#5f8a48" d="m5 12 9-5v10z"/><use href="#cursor"/></svg></button>
        <button aria-label="Select points polygon"><svg viewBox="0 0 24 24"><path stroke="#777" stroke-dasharray="3 3" d="M2 3h20l-3 8 3 10-14 1z"/><g fill="#d83a2a" stroke="none"><circle cx="5" cy="7" r="2"/><circle cx="12" cy="5" r="2"/><circle cx="18" cy="9" r="2"/><circle cx="8" cy="13" r="2"/><circle cx="14" cy="15" r="2"/><circle cx="6" cy="19" r="2"/></g><use href="#cursor"/></svg></button>
        <button aria-label="Select block"><svg viewBox="0 0 24 24"><use href="#dash"/><circle cx="6" cy="6" r="3.500" fill="#1b7fc4" stroke="none"/><circle cx="6" cy="17" r="3.500" fill="#1b7fc4" stroke="none"/><circle cx="15" cy="13" r="4.500" fill="#8fca70" stroke="#5f8a48"/><use href="#cursor"/></svg></button>
        <button aria-label="Interactive select block"><svg viewBox="0 0 24 24"><path fill="#b5b5b5" stroke="#888" d="m2 10 10-8 10 0v12l-8 8H2zM2 10h12l8-8m-8 8v12"/><use href="#cursor"/></svg></button>
        <button aria-label="Zoom pick"><svg viewBox="0 0 24 24"><circle cx="9" cy="10" r="3.500" fill="#ccc" stroke="#aaa"/><path stroke="#999" stroke-width="2.500" d="m14 15 6 6"/></svg></button>
        <button aria-label="Interactive cells"><svg viewBox="0 0 24 24"><path fill="#8fca70" stroke="#5f8a48" d="m12 4 8 14H4z"/><use href="#cursor"/></svg></button>
        <button aria-label="Interactive points"><svg viewBox="0 0 24 24"><path stroke="#aaa" d="m12 5 8 13H4z"/><g fill="#d83a2a" stroke="none"><circle cx="12" cy="4" r="2.500"/><circle cx="4" cy="19" r="2.500"/></g><use href="#cursor"/></svg></button>
        <button aria-label="Hover cells"><svg viewBox="0 0 24 24"><path fill="#8fca70" stroke="#5f8a48" d="m7 9 6 12H1z"/><path stroke="#66784f" stroke-width="2" d="M14 5c1-5 9-4 8 1 0 3-4 4-4 8m0 2v3"/></svg></button>
        <button aria-label="Hover points"><svg viewBox="0 0 24 24"><circle cx="6" cy="19" r="4" fill="#d8402f" stroke="#a32c20"/><path stroke="#66784f" stroke-width="2" d="M14 5c1-5 9-4 8 1 0 3-4 4-4 8m0 2v3"/></svg></button>
        <button aria-label="Grow selection"><svg viewBox="0 0 24 24"><path stroke="#999" stroke-width="7" d="M12 1v22M1 12h22"/></svg></button>
        <button aria-label="Shrink selection"><svg viewBox="0 0 24 24"><path stroke="#999" stroke-width="6" d="M1 12h22"/></svg></button>
        <button aria-label="Clear selection"><svg viewBox="0 0 24 24"><path fill="#999" stroke="none" d="M2 5q10-8 20 0v3H2z"/><path fill="#aaa" stroke="#888" d="M4 8h16l-1 16H5z"/><path stroke="#777" d="M8 9v14M12 9v14M16 9v14"/></svg></button>
        <strong class="viewname">RenderView1</strong>
        <div class="splits">
          <button class="btn" aria-label="Split horizontally"><svg viewBox="0 0 16 16"><path fill="#cdd5ec" stroke="#999" d="M1.500 1.500h13v13h-13zM8 1v14"/></svg></button>
          <button class="btn" aria-label="Split vertically"><svg viewBox="0 0 16 16"><path fill="#cdd5ec" stroke="#999" d="M1.500 1.500h13v13h-13zM1 8h14"/></svg></button>
          <button class="btn" aria-label="Maximize"><svg class="win"><use href="#window"/></svg></button>
          <button class="btn" aria-label="Close view"><svg class="sm"><use href="#close"/></svg></button>
        </div>
      </div>
      <div class="render">
        <svg viewBox="474 219 1441 792" role="img" aria-label="Slice of the duct with its plane widget">
          <g fill="none" stroke="#dadbe2" shape-rendering="crispEdges">
            <path d="M661.500 522.500H1727.500V707.500H661.500zM759.500 539.500H1629.500V690.500H759.500z"/>
          </g>
          <path fill="none" stroke="#dadbe2" d="m662 523 97.500 16.500M662 707l97.500-16.500M1727 523l-98 16.500M1727 707l-98-16.500"/>
          <path fill="#b69480" fill-rule="evenodd" d="M833 548.500 905 547l33.500 0 .5 30 14.500-2 1-27.500L1230 543.500l395-3.500-21 110-5.500 5-295.500-2-.5-26h-12l-1 26-335-2.500-1-20-14 2-.5 18-72.500 0-2-36.500-26.500-.5zM939 595.500l14.500-2.500v19.500l-14.500 2.500z"/>
          <path stroke="#f2dfd8" d="M1591 539.500h38"/>
          <path fill="none" stroke="#500000" stroke-width="2" d="M738 537 1718 525.500M738 695.500 1718 706"/>
          <path fill="none" stroke="#c40000" stroke-width="2.500" d="M738.500 535.500 1718.500 524.500V705.500L738.500 694z"/>
          <path stroke="#fff" stroke-width="2" d="m801 580 137 7"/>
          <ellipse cx="795.500" cy="579.500" rx="6" ry="6.500" fill="#bfbdb5"/>
          <ellipse cx="938.500" cy="587" rx="4.500" ry="5" fill="url(#ball)"/>
          <path stroke="#d6d600" d="M572.500 907v-40"/>
          <path fill="#d8d800" stroke="#5a5a00" stroke-width=".5" d="m573 858 4 10h-8z"/>
          <path stroke="#e80000" stroke-width="1.500" d="M578 912h40"/>
          <path fill="#e80000" stroke="#600" stroke-width=".5" d="m628 912-11-4v8z"/>
          <circle cx="573" cy="911.500" r="5" fill="#006400"/>
          <g class="axislabel"><text x="575" y="868">Y</text><text x="576" y="912">Z</text><text x="620" y="912">X</text></g>
        </svg>
      </div>
      </div>
    </section>
  </main>

  <footer class="status"><button class="btn" aria-label="Abort" disabled><svg viewBox="0 0 10 10"><path d="m2 2 6 6m0-6-6 6" stroke="#aaa" stroke-width="3"/></svg></button><output class="progressbar"></output></footer>

  <button class="upload"><span class="cloud"><svg viewBox="0 0 20 16"><g fill="none" stroke="#fff" stroke-width="2.500"><circle cx="10" cy="5" r="3.500"/><circle cx="5" cy="11" r="3.500"/><circle cx="15" cy="11" r="3.500"/></g></svg></span><span class="label">拖拽上传</span></button>
  <div class="meter"></div>
</div>
</body>
</html>
```

FILE: styles.css
```css
* { box-sizing: border-box; }
:root {
  --ui: "Noto Sans", "Noto Sans CJK SC", sans-serif;
  --mono: "DejaVu Sans Mono", "Liberation Mono", monospace;
  --line: #b4b4b4;
  --face: #efefef;
}
body { margin: 0; background: var(--face); color: #000; font: 10px/14px var(--mono); }
button, input, select { font: inherit; color: inherit; margin: 0; padding: 0; border: 0; background: none; }
h2, h3, h4, p, ul { margin: 0; padding: 0; font-size: inherit; }
a { color: inherit; text-decoration: none; }
svg { display: block; fill: none; overflow: visible; }
.defs { position: absolute; width: 0; height: 0; }
.app { position: relative; display: flex; flex-direction: column; min-height: 100vh; overflow: hidden; }

/* title bar and menu */
.titlebar { display: flex; align-items: center; height: 23px; padding: 0 2px 3px; background: #fff; font: 12px/20px var(--ui); }
.logo { width: 16px; height: 12px; margin-right: 5px; }
.progress { position: absolute; top: 0; left: 840px; width: 240px; height: 1px; background: linear-gradient(90deg, #0078d7 48px, #ddd 48px); }
.winbtns { display: flex; margin-left: auto; }
.winbtns button { width: 46px; height: 20px; display: grid; place-items: center; }
.winbtns svg { width: 12px; height: 12px; stroke: #000; }
.menubar { display: flex; gap: 15px; height: 22px; padding: 0 10px; border-bottom: 1px solid #d8d8d8; font: 12px/22px var(--ui); }
.menubar u { text-underline-offset: 2px; }

/* tool bars */
.toolbar { display: flex; align-items: center; height: 39px; border-bottom: 1px solid var(--line); background: linear-gradient(#fafafa, #eee); }
.toolbar button { flex: none; width: 32px; height: 32px; display: grid; place-items: center; border: 1px solid transparent; border-radius: 3px; }
.toolbar.wide { height: 38px; }
.toolbar.wide button { width: 33px; }
.toolbar svg { width: 24px; height: 24px; }
.toolbar .on { background: #dcdcdc; border-color: #aaa; }
.handle { flex: none; width: 17px; height: 18px; background: radial-gradient(circle, #bbb 1px, transparent 1px) 0 0 / 3px 3px; background-clip: content-box; padding: 0 5px 0 7px; }
.handle.first { width: 13px; padding: 0 4px 0 4px; }
.wide .handle { width: 16px; }
.wide .handle.first { width: 12px; }
.sep { flex: none; width: 6px; height: 18px; background: linear-gradient(#ccc, #ccc) 3px 0 / 1px 100% no-repeat; }
.play path { fill: #a6d388; stroke: #66784f; }
.ax path { stroke: #7a6a4a; stroke-width: 0.7px; }
svg text { fill: #777; stroke: none; font: bold 9px "Open Sans", sans-serif; }
svg text.glyph { fill: #222; font: italic bold 13px "Open Sans", sans-serif; }
svg text.deg { font-size: 8px; }
.dim { opacity: 0.6; }
.dim * { stroke: #999; }
.timelabel { margin-right: 2px; }
.field { height: 22px; padding: 0 3px; background: #fff; border: 1px solid #aaa; border-radius: 3px; min-width: 0; }
.time { width: 108px; margin-right: 3px; }
.spin { display: flex; width: 35px; height: 20px; border: 1px solid var(--line); border-radius: 3px; }
.spin input { width: 21px; padding-left: 4px; color: #888; }
.steps { display: flex; flex: 1; flex-direction: column; justify-content: space-evenly; align-items: center; border-left: 1px solid #ccc; }
.steps i { width: 0; border: 4px solid transparent; border-top-width: 0; border-bottom-color: #bbb; }
.steps .down { border-width: 4px 4px 0; border-color: #bbb transparent; }

.combo { position: relative; display: flex; height: 22px; border: 1px solid #aaa; border-radius: 3px; background: linear-gradient(#fdfdfd, #ededed); }
.combo select { appearance: none; flex: 1; width: 100%; padding-left: 4px; outline: 0; }
.combo::after { content: ""; position: absolute; right: 7px; top: 8px; border: 4px solid transparent; border-top-color: #555; border-bottom: 0; pointer-events: none; }
.array { width: 151px; height: 24px; margin-right: 4px; }
.array select { padding-left: 24px; }
.point { position: absolute; left: 11px; top: 9px; width: 5px; height: 5px; background: #f5c32c; border: 1px solid #c08a20; border-radius: 2px; }
.component { width: 72px; }
.off { border-color: #ccc; }
.off::after { border-top-color: #aaa; }
.repr { width: 150px; }

/* docks */
.main { flex: 1; display: flex; }
.dock { flex: none; width: 463px; display: flex; flex-direction: column; padding-bottom: 8px; }
.docktitle { display: flex; align-items: center; gap: 3px; height: 21px; padding: 0 2px 0 4px; font: 12px/20px var(--ui); }
.docktitle h2 { flex: 1; font-weight: normal; }
.docktitle svg, .tab button svg, svg.sm { width: 11px; height: 11px; }
.tree { flex: 1; list-style: none; background: #fff; border: 1px solid var(--line); padding-top: 1px; }
.tree li { display: flex; align-items: center; height: 22px; }
.eye { width: 21px; padding-left: 4px; }
.eye svg { width: 14px; height: 10px; }
.node { display: flex; align-items: center; gap: 2px; height: 18px; padding: 0 5px 0 1px; }
.node svg { width: 16px; height: 16px; }
.selected { background: #3d99fa; color: #fff; }
.selected svg { opacity: 0.75; }
.hgrip { width: 17px; height: 2px; margin: 1px auto 3px; background: repeating-linear-gradient(90deg, #bbb 0 1px, transparent 1px 3px); }
.vgrip { width: 7px; background: repeating-linear-gradient(#bbb 0 1px, transparent 1px 3px) 3px 421px / 1px 17px no-repeat; }
.tabs { display: flex; align-items: flex-end; height: 23px; border-bottom: 1px solid var(--line); }
.tabs button { height: 20px; padding: 0 11px; border: 1px solid var(--line); border-bottom: 0; border-left: 0; background: #dedede; }
.tabs .active { height: 23px; margin-bottom: -1px; border-left: 1px solid var(--line); border-radius: 3px 3px 0 0; background: #f6f6f6; }

.props { padding: 8px 9px 0; }
.btn { display: flex; align-items: center; justify-content: center; gap: 2px; border: 1px solid #aaa; border-radius: 3px; background: linear-gradient(#fdfdfd, #eaeaea); }
.btn svg { width: 14px; height: 14px; }
.btn:disabled { border-color: #c6c6c6; color: #888; }
.actions { display: grid; grid-template-columns: repeat(4, 1fr); gap: 2px; }
.actions .btn { height: 24px; }
.search { display: flex; gap: 2px; margin: 6px 0; }
.search .field { flex: 1; }
.search .btn { width: 24px; height: 23px; }
::placeholder { color: #888; opacity: 1; }
.scroll { display: flex; }
.form { flex: 1; min-width: 0; }
.grouphead { display: flex; align-items: center; gap: 4px; height: 26px; }
.grouphead h3 { flex: 1; height: 26px; display: flex; align-items: center; gap: 7px; padding-left: 11px; border: 1px solid var(--line); font-size: 12px; background: #ececec; }
.minus { width: 13px; height: 5px; background: #2e93cc; border: 1px solid #7ab; }
.grouphead .btn { width: 28px; height: 24px; }
.grouphead .btn svg { width: 16px; height: 16px; }
.row { display: flex; align-items: center; gap: 2px; height: 22px; margin-bottom: 2px; }
.row .field, .row .combo { flex: 1; }
.row label { width: 36px; }
.slicetype { margin: 6px 0; }
.slicetype label { width: 62px; }
.form h4 { height: 17px; padding: 1px 0; border-bottom: 1px solid #999; font-size: 12px; margin-bottom: 8px; line-height: 14px; }
.check { display: flex; align-items: center; gap: 4px; height: 14px; margin-bottom: 8px; }
.form h4 + .check { margin-bottom: 4px; }
.check:last-child { margin-bottom: 0; }
.check input { appearance: none; width: 14px; height: 14px; background: #fff; border: 1px solid var(--line); }
.check input:checked::before { content: ""; display: block; width: 10px; height: 10px; margin: 1px; background: #111; clip-path: polygon(0 45%, 22% 38%, 40% 65%, 75% 0, 100% 0, 48% 100%, 32% 100%); }
.note { padding-right: 16px; font-weight: bold; font-size: 11px; }
.normals { display: grid; grid-template-columns: 1fr 1fr; gap: 2px; padding-bottom: 4px; border-bottom: 1px solid #999; }
.normals .btn { height: 20px; gap: 0; }
.left { grid-column: 1; }
.full { grid-column: 1 / -1; }
.offset { height: 37px; border-bottom: 1px solid #999; margin-bottom: 8px; gap: 4px; }
.offset label { padding-bottom: 2px; }
.offset .field { margin-top: 4px; }
.bar { width: 14px; display: flex; flex-direction: column; border-left: 1px solid var(--line); }
.bar .arrow { height: 14px; display: grid; place-items: center; background: #f8f8f8; border-bottom: 1px solid var(--line); }
.bar .arrow::before { content: ""; width: 0; height: 0; border: solid transparent; border-width: 0 4px 4px; border-bottom-color: #555; }
.bar .down { border: 0; }
.bar .down::before { border-width: 4px 4px 0; border-color: #555 transparent; }
.bar .thumb { height: 146px; background: linear-gradient(90deg, #fff, #eee); border-bottom: 1px solid var(--line); }
.bar .track { flex: 1; background: #e2e2e2; border-bottom: 1px solid var(--line); }

/* view area */
.views { flex: 1; min-width: 0; display: flex; flex-direction: column; padding: 1px 1px 0 0; }
.layouttabs { display: flex; align-items: flex-end; height: 27px; }
.tab { display: flex; align-items: center; gap: 3px; height: 27px; width: 113px; padding-left: 10px; background: #fbfbfb; border: 1px solid var(--line); border-bottom: 0; border-radius: 3px 3px 0 0; }
.win { width: 16px; height: 16px; }
.add { width: 29px; height: 25px; border: 1px solid var(--line); border-left: 0; border-bottom: 0; background: #e6e6e6; }
.viewpane { flex: 1; display: flex; flex-direction: column; border: 1px solid var(--line); border-right-color: #ddd; }
.viewbar { display: flex; align-items: center; height: 26px; padding-bottom: 1px; }
.viewbar > button { flex: none; width: 26px; height: 24px; display: grid; place-items: center; }
.viewbar > button svg { width: 17px; height: 17px; }
.threed { color: #666; font: bold 11px "Open Sans", sans-serif; }
.viewname { margin-left: auto; margin-right: 11px; font-size: 12px; text-decoration: underline; }
.splits { display: flex; gap: 1px; }
.splits .btn { width: 26px; height: 25px; }
.splits svg.win { width: 18px; height: 18px; }
.splits svg.sm { width: 11px; height: 11px; }
.render { flex: 1; display: flex; contain: size; border: 2px solid #0000f4; padding: 1px; background: #fff; }
.render svg { flex: 1; min-width: 0; background: #52576e; }
.axislabel text { fill: #fff; font: 15px "Liberation Sans", sans-serif; }

.status { display: flex; gap: 2px; height: 26px; padding: 4px 2px 2px 50%; border-bottom: 1px solid #222; }
.status .btn { width: 20px; }
.status .btn svg { width: 10px; height: 10px; }
.progressbar { flex: 1; border: 1px solid #999; border-right-color: #fff; border-bottom-color: #fff; }

/* desktop overlays */
.upload { position: absolute; right: 107px; top: 28px; display: flex; width: 104px; height: 25px; overflow: hidden; border: 1px solid #1b98fb; border-radius: 3px; background: linear-gradient(#e2f5ff, #c3ebff); color: #4ab4f5; font: 12px/22px "Noto Sans CJK SC", sans-serif; }
.cloud { width: 29px; height: 23px; display: grid; place-items: center; background: #1ea0ff; }
.cloud svg { width: 20px; height: 16px; }
.label { flex: 1; }
.meter { position: absolute; right: 0; top: 675px; width: 10px; height: 58px; border: 1px solid #1c1f2c; border-right: 0; border-radius: 3px 0 0 3px; background: repeating-linear-gradient(#6dd9a8 0 1px, #3c4159 1px 3px) 3px 36px / 4px 16px no-repeat, repeating-linear-gradient(#222642 0 1px, #3c4159 1px 3px) 3px 6px / 4px 30px no-repeat, #3e435a; }
```
